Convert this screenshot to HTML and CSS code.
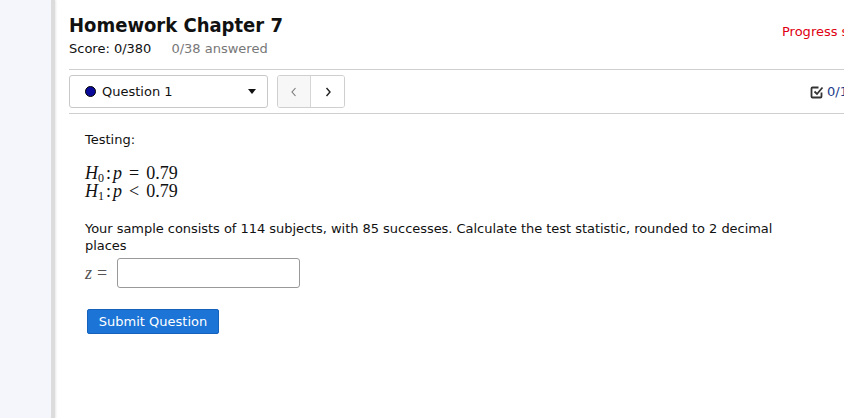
FILE: index.html
```html
<!DOCTYPE html>
<html>
<head>
<meta charset="utf-8">
<link rel="stylesheet" href="styles.css">
</head>
<body>
<div class="app">
  <aside class="sidebar"></aside>
  <main class="main">
    <header class="header">
      <div class="header-main">
        <h1 class="title">Homework Chapter 7</h1>
        <div class="meta"><span class="score">Score: 0/380</span><span class="answered">0/38 answered</span></div>
      </div>
      <div class="progress">Progress saved</div>
    </header>
    <div class="toolbar">
      <div class="select">
        <span class="dot"></span>
        <span class="select-label">Question 1</span>
        <span class="caret"></span>
      </div>
      <div class="nav">
        <button class="nav-btn disabled" aria-label="previous">
          <svg width="10" height="12" viewBox="0 0 10 12"><path d="M6.5 2 L3 6 L6.5 10" fill="none" stroke="#777" stroke-width="1.1"/></svg>
        </button>
        <button class="nav-btn" aria-label="next">
          <svg width="10" height="12" viewBox="0 0 10 12"><path d="M3.5 2 L7 6 L3.5 10" fill="none" stroke="#222" stroke-width="1.4"/></svg>
        </button>
      </div>
      <div class="status">
        <svg width="14" height="14" viewBox="0 0 14 14"><path d="M11.5 7.5 V11.5 Q11.5 12.5 10.5 12.5 H2.5 Q1.5 12.5 1.5 11.5 V3.5 Q1.5 2.5 2.5 2.5 H8.5" fill="none" stroke="#333" stroke-width="1.8"/><path d="M4.5 6.5 L7 9 L12.5 2.5" fill="none" stroke="#333" stroke-width="1.8"/></svg>
        <span class="status-text">0/1 pt</span>
      </div>
    </div>
    <section class="question">
      <p class="testing">Testing:</p>
      <div class="math-block">
        <div class="math"><i>H</i><sub>0</sub><span class="colon">:</span><i>p</i><span class="op">=</span>0.79</div>
        <div class="math"><i>H</i><sub>1</sub><span class="colon">:</span><i>p</i><span class="op">&lt;</span>0.79</div>
      </div>
      <p class="prompt">Your sample consists of 114 subjects, with 85 successes. Calculate the test statistic, rounded to 2 decimal places</p>
      <div class="answer-row">
        <span class="math z"><i>z</i><span class="op">=</span></span>
        <input class="answer" type="text">
      </div>
      <button class="submit">Submit Question</button>
    </section>
  </main>
</div>
</body>
</html>
```
FILE: styles.css
```css
html, body {
  margin: 0;
  padding: 0;
  background: #fff;
  overflow: hidden;
}
body {
  font-family: "DejaVu Sans", sans-serif;
  color: #111;
  width: 844px;
  height: 418px;
}
.app {
  display: flex;
  height: 418px;
}
.sidebar {
  width: 51px;
  flex: none;
  background: #f5f6fc;
  border-right: 4px solid #dcdcdc;
  box-shadow: 1px 0 2px #e8e8e8;
}
.main {
  flex: none;
  width: 900px;
  padding-left: 14px;
}
.header {
  display: flex;
  height: 69px;
}
.header-main {
  width: 713px;
  flex: none;
}
.title {
  margin: 12px 0 0 0;
  font-family: "DejaVu Sans Condensed", "DejaVu Sans", sans-serif;
  font-size: 20px;
  font-weight: 600;
  line-height: 26px;
  color: #111;
}
.meta {
  margin-top: 3px;
  font-size: 13px;
  line-height: 16px;
}
.answered {
  color: #777;
  margin-left: 20px;
}
.progress {
  color: #e00012;
  font-size: 13px;
  margin-top: 24px;
  white-space: nowrap;
}
.toolbar {
  display: flex;
  align-items: center;
  border-top: 1px solid #cfcfcf;
  border-bottom: 1px solid #cfcfcf;
  height: 43px;
}
.select {
  width: 199px;
  height: 33px;
  box-sizing: border-box;
  border: 1px solid #c9c9c9;
  border-radius: 3px;
  display: flex;
  align-items: center;
  padding-left: 15px;
  padding-right: 8px;
  font-size: 13px;
}
.dot {
  width: 11px;
  height: 11px;
  border-radius: 50%;
  background: #0a0a9a;
  border: 1px solid #000;
  box-sizing: border-box;
  margin-right: 6px;
}
.select-label {
  flex: 1;
}
.caret {
  width: 0;
  height: 0;
  border-left: 4px solid transparent;
  border-right: 4px solid transparent;
  border-top: 5px solid #111;
  margin-right: 3px;
}
.nav {
  display: flex;
  margin-left: 9px;
  border: 1px solid #cfcfcf;
  border-radius: 3px;
  height: 33px;
  box-sizing: border-box;
  overflow: hidden;
}
.nav-btn {
  width: 33px;
  height: 31px;
  border: 0;
  margin: 0;
  padding: 0;
  background: #fff;
  display: flex;
  align-items: center;
  justify-content: center;
}
.nav-btn.disabled {
  background: #f7f7f7;
  border-right: 1px solid #d6d6d6;
}
.status {
  margin-left: 465px;
  display: flex;
  align-items: center;
  font-size: 13px;
  color: #1a3a8a;
  white-space: nowrap;
}
.status svg {
  margin-right: 3px;
}
.question {
  padding-left: 16px;
  padding-top: 17px;
  font-size: 13px;
}
.testing {
  margin: 0;
  line-height: 17px;
}
.math-block {
  margin-top: 16px;
}
.math {
  font-family: "Liberation Serif", "DejaVu Serif", serif;
  font-size: 18px;
  line-height: 18px;
  color: #111;
}
.math i {
  font-style: italic;
}
.math sub {
  font-size: 12px;
  vertical-align: -3px;
  line-height: 0;
}
.colon {
  margin: 0 2px 0 2px;
}
.op {
  margin: 0 7px;
}
.prompt {
  margin: 20px 0 0 0;
  line-height: 17px;
  width: 700px;
  letter-spacing: -0.04px;
}
.answer-row {
  display: flex;
  align-items: center;
  margin-top: 4px;
}
.z {
  color: #555;
}
.z .op {
  margin: 0 10px 0 5px;
}
.answer {
  width: 183px;
  height: 30px;
  box-sizing: border-box;
  border: 1px solid #999;
  border-radius: 3px;
  margin: 0;
}
.submit {
  margin-top: 21px;
  background: #1b74d6;
  color: #fff;
  border: 1px solid #1662bb;
  border-radius: 2px;
  font-family: inherit;
  font-size: 13px;
  font-weight: normal;
  height: 25px;
  width: 132px;
  padding: 0;
  margin-left: 2px;
}
```
